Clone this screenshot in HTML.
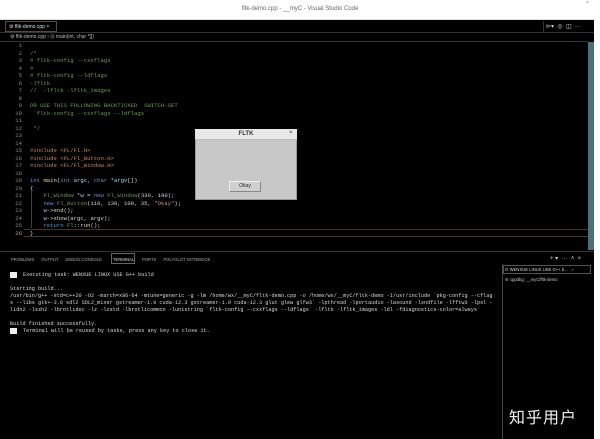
<!DOCTYPE html>
<html><head><meta charset="utf-8"><style>
*{margin:0;padding:0;box-sizing:border-box}
body{width:600px;height:439px;background:#fff;position:relative;overflow:hidden;font-family:"Liberation Sans",sans-serif}
.abs{position:absolute}
.ln{position:absolute;left:0;width:22px;text-align:right;font-size:5.6px;color:#8a8a8a;font-family:"Liberation Mono",monospace}
.cd{position:absolute;left:30px;font-size:5.6px;font-family:"Liberation Mono",monospace;white-space:pre;color:#d4d4d4}
.g{color:#6a9955}.o{color:#c8865e}.b{color:#569cd6}.y{color:#dcdcaa}.s{color:#ce9178}.c{color:#9cdcfe}
.t{font-size:5.2px;color:#d8d8d8;font-family:"Liberation Mono",monospace;white-space:pre;position:absolute;left:10px}
</style></head><body>
<div class="abs" style="left:0;top:0;width:600px;height:20px;background:#fff;border-bottom:1px solid #e4e4e4"></div>
<div class="abs" style="left:0;top:6px;width:600px;text-align:center;font-size:6px;color:#666">fltk-demo.cpp - __myC - Visual Studio Code</div>
<div class="abs" style="left:586px;top:0;width:8px;height:6px;font-size:5px;color:#888">×</div>
<div class="abs" style="left:594px;top:0;width:6px;height:6px;background:#e8b83a"></div>
<div class="abs" style="left:0;top:20px;width:594px;height:419px;background:#000"></div>
<div class="abs" style="left:0;top:32px;width:594px;height:1px;background:#333"></div>
<div class="abs" style="left:5px;top:21px;width:52px;height:11px;border:1px solid #5a4a3a;font-size:5px;color:#ddd;padding:2px 3px">⚙ fltk-demo.cpp ×</div>
<div class="abs" style="left:543px;top:21px;width:1px;height:11px;background:#333"></div>
<div class="abs" style="left:546px;top:23px;font-size:6px;color:#ccc;white-space:pre">⊳▾  ◎  ◫  ···</div>
<div class="abs" style="left:10px;top:34px;font-size:5px;color:#bbb">⚙ fltk-demo.cpp › ⊡ main(int, char *[])</div>
<div class="abs" style="left:0;top:41px;width:588px;height:1px;background:#333"></div>
<div class="abs" style="left:588px;top:42px;width:6px;height:208px;background:#4a7080"></div>
<div class="abs" style="left:594px;top:0;width:6px;height:439px;background:#fff"></div>

<div class="abs" style="left:0;top:42px;width:588px;height:200px">
<div class="ln" style="top:0">1</div>
<div class="ln" style="top:7.5px">2</div><div class="cd g" style="top:7.5px">/*</div>
<div class="ln" style="top:15px">3</div><div class="cd g" style="top:15px"># fltk-config --cxxflags</div>
<div class="ln" style="top:22.5px">4</div><div class="cd g" style="top:22.5px">#</div>
<div class="ln" style="top:30px">5</div><div class="cd g" style="top:30px"># fltk-config --ldflags</div>
<div class="ln" style="top:37.5px">6</div><div class="cd g" style="top:37.5px">-lfltk</div>
<div class="ln" style="top:45px">7</div><div class="cd g" style="top:45px">//  -lfltk -lfltk_images</div>
<div class="ln" style="top:52.5px">8</div>
<div class="ln" style="top:60px">9</div><div class="cd g" style="top:60px">OR USE THIS FOLLOWING BACKTICKED  SWITCH-SET</div>
<div class="ln" style="top:67.5px">10</div><div class="cd g" style="top:67.5px"> `fltk-config --cxxflags --ldflags`</div>
<div class="ln" style="top:75px">11</div>
<div class="ln" style="top:82.5px">12</div><div class="cd g" style="top:82.5px"> */</div>
<div class="ln" style="top:90px">13</div>
<div class="ln" style="top:97.5px">14</div>
<div class="ln" style="top:105px">15</div><div class="cd o" style="top:105px">#include &lt;FL/Fl.H&gt;</div>
<div class="ln" style="top:112.5px">16</div><div class="cd o" style="top:112.5px">#include &lt;FL/Fl_Button.H&gt;</div>
<div class="ln" style="top:120px">17</div><div class="cd o" style="top:120px">#include &lt;FL/Fl_Window.H&gt;</div>
<div class="ln" style="top:127.5px">18</div>
<div class="ln" style="top:135px">19</div><div class="cd" style="top:135px"><span class="b">int</span> <span class="y">main</span>(<span class="b">int</span> <span class="c">argc</span>, <span class="b">char</span> *<span class="c">argv</span>[])</div>
<div class="ln" style="top:142.5px">20</div><div class="cd y" style="top:142.5px">{</div>
<div class="ln" style="top:150px">21</div><div class="cd" style="top:150px">    <span class="g">Fl_Window</span> *<span class="c">w</span> = <span class="b">new</span> <span class="g">Fl_Window</span>(330, 190);</div>
<div class="ln" style="top:157.5px">22</div><div class="cd" style="top:157.5px">    <span class="b">new</span> <span class="g">Fl_Button</span>(110, 130, 100, 35, <span class="s">"Okay"</span>);</div>
<div class="ln" style="top:165px">23</div><div class="cd" style="top:165px">    <span class="c">w</span>-&gt;<span class="y">end</span>();</div>
<div class="ln" style="top:172.5px">24</div><div class="cd" style="top:172.5px">    <span class="c">w</span>-&gt;<span class="y">show</span>(argc, argv);</div>
<div class="ln" style="top:180px">25</div><div class="cd" style="top:180px">    <span class="b">return</span> <span class="g">Fl</span>::<span class="y">run</span>();</div>
<div class="abs" style="left:24px;top:186.5px;width:564px;height:8px;border-top:1px solid #4a3520;border-bottom:1px solid #4a3520"></div>
<div class="ln" style="top:187.5px;color:#c8a060">26</div><div class="cd y" style="top:187.5px">}</div>
<div class="abs" style="left:31px;top:148px;width:1px;height:38px;background:#404040"></div>
</div>

<div class="abs" style="left:195px;top:129px;width:102px;height:71px;background:#c8c8c8;border:1px solid #999"></div>
<div class="abs" style="left:195px;top:129px;width:102px;height:11px;background:#e8e8e8;border-bottom:1px solid #bbb;text-align:center;font-size:6px;font-weight:bold;color:#333;line-height:10px">FLTK</div>
<div class="abs" style="left:289px;top:130px;font-size:6px;color:#333">×</div>
<div class="abs" style="left:229px;top:181px;width:32px;height:11px;background:#d0d0d0;border:1px solid #888;border-top-color:#eee;border-left-color:#eee;font-size:5px;text-align:center;line-height:9px;color:#222">Okay</div>

<div class="abs" style="left:0;top:251px;width:594px;height:1px;background:#333"></div>
<div class="abs" style="left:11px;top:257px;font-size:4.2px;color:#aaa;white-space:pre">PROBLEMS      OUTPUT      DEBUG CONSOLE</div>
<div class="abs" style="left:111px;top:253px;width:24px;height:11px;border:1px solid #666;font-size:4.2px;color:#ddd;padding:3px 1px">TERMINAL</div>
<div class="abs" style="left:142px;top:257px;font-size:4.2px;color:#aaa;white-space:pre">PORTS      POLYGLOT NOTEBOOK</div>
<div class="abs" style="left:550px;top:255px;font-size:6px;color:#ccc;white-space:pre">+ ▾  ···  ˄  ×</div>
<div class="abs" style="left:502px;top:264px;width:1px;height:175px;background:#444"></div>
<div class="abs" style="left:503px;top:265px;width:88px;height:9px;border:1px solid #555"></div>
<div class="abs" style="left:505px;top:267px;font-size:4.2px;color:#ddd;white-space:pre">⊡ WENXUE LINUX USE G++ b...   ✓</div>
<div class="abs" style="left:505px;top:277px;font-size:4.2px;color:#ccc;white-space:pre">⚙ cppdbg: __myC/fltk-demo</div>

<div class="abs" style="left:10px;top:272px;width:7px;height:6px;background:#eee"></div>
<div class="t" style="top:272px;left:23px">Executing task: WENXUE LINUX USE G++ build</div>
<div class="t" style="top:286px">Starting build...</div>
<div class="t" style="top:293px">/usr/bin/g++ -std=c++20 -O2 -march=x86-64 -mtune=generic -g -lm /home/wx/__myC/fltk-demo.cpp -o /home/wx/__myC/fltk-demo -I/usr/include `pkg-config --cflag</div>
<div class="t" style="top:300px">s --libs gtk+-3.0 sdl2 SDL2_mixer gstreamer-1.0 cuda-12.3 gstreamer-1.0 cuda-12.3 glut glew glfw3` -lpthread -lportaudio -lasound -lsndfile -lfftw3 -lpsl -</div>
<div class="t" style="top:307px">lidn2 -lssh2 -lbrotlidec -lz -lzstd -lbrotlicommon -lunistring `fltk-config --cxxflags --ldflags` -lfltk -lfltk_images -ldl -fdiagnostics-color=always</div>
<div class="t" style="top:321px">Build finished successfully.</div>
<div class="abs" style="left:10px;top:328px;width:7px;height:6px;background:#eee"></div>
<div class="t" style="top:328px;left:23px">Terminal will be reused by tasks, press any key to close it.</div>

<div class="abs" style="left:509px;top:404px;font-size:16px;color:#f0f0f0;font-family:'Noto Sans CJK SC',sans-serif;letter-spacing:1px">知乎用户</div>
</body></html>
